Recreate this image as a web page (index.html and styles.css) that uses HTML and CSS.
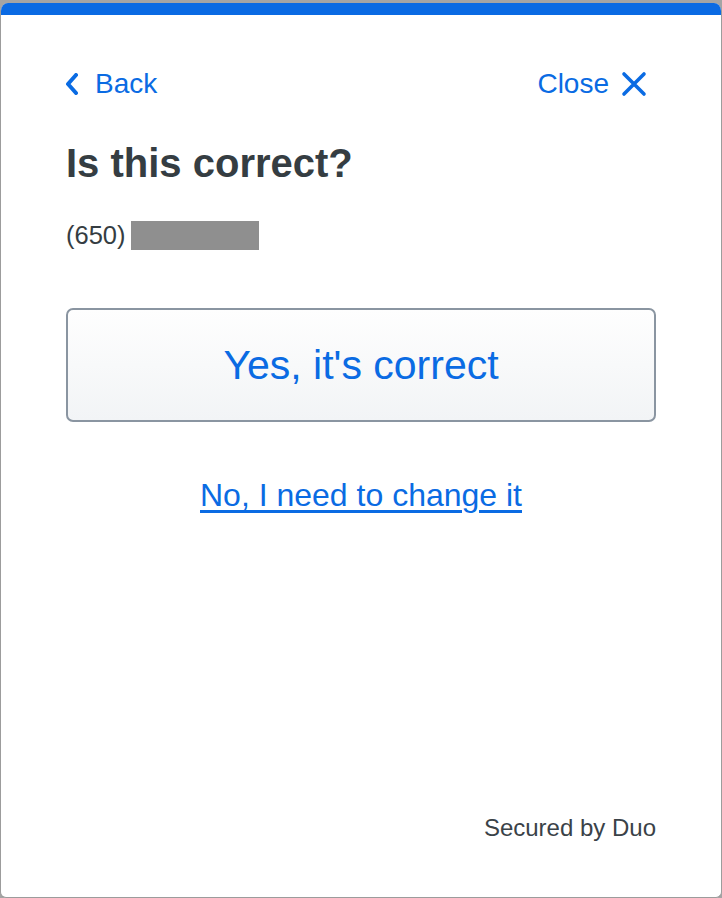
FILE: index.html
```html
<!DOCTYPE html>
<html lang="en">
<head>
<meta charset="utf-8">
<title>Is this correct?</title>
<link rel="stylesheet" href="styles.css">
</head>
<body>
<div class="card">
  <div class="topbar"></div>
  <div class="content">
    <nav class="nav">
      <a class="nav-link back" href="#">
        <svg class="chev" width="14" height="22" viewBox="0 0 14 22" aria-hidden="true"><path d="M11 2 L3 11 L11 20" fill="none" stroke="currentColor" stroke-width="4" stroke-linecap="round" stroke-linejoin="round"/></svg>
        <span>Back</span>
      </a>
      <a class="nav-link close" href="#">
        <span>Close</span>
        <svg class="xicon" width="26" height="26" viewBox="0 0 26 26" aria-hidden="true"><path d="M3 3 L23 23 M23 3 L3 23" fill="none" stroke="currentColor" stroke-width="3.6" stroke-linecap="round"/></svg>
      </a>
    </nav>
    <h1 class="title">Is this correct?</h1>
    <p class="phone">(650) <span class="redact"></span></p>
    <button class="primary" type="button">Yes, it's correct</button>
    <div class="change"><a href="#" class="change-link">No, I need to change it</a></div>
  </div>
  <footer class="footer">Secured by Duo</footer>
</div>
</body>
</html>
```
FILE: styles.css
```css
html, body {
  margin: 0;
  padding: 0;
}
body {
  background: #a4a4a4;
  font-family: "Liberation Sans", Arial, Helvetica, sans-serif;
  width: 722px;
  height: 898px;
  overflow: hidden;
}
.card {
  margin-top: 3px;
  height: 895px;
  box-sizing: border-box;
  background: #ffffff;
  border: 1px solid #9c9c9c;
  border-top: none;
  border-radius: 8px 8px 6px 6px;
  overflow: hidden;
  display: flex;
  flex-direction: column;
}
.topbar {
  height: 12px;
  background: #0a6ae3;
  margin: 0 -1px;
}
.content {
  padding: 0 65px;
  display: flex;
  flex-direction: column;
}
.nav {
  margin-top: 53px;
  display: flex;
  justify-content: space-between;
  align-items: center;
  height: 32px;
}
.nav-link {
  color: #0a6be3;
  text-decoration: none;
  font-size: 28px;
  line-height: 32px;
  display: flex;
  align-items: center;
}
.back .chev {
  margin-right: 16px;
  margin-left: -1px;
}
.close .xicon {
  margin-left: 12px;
  margin-right: 9px;
}
.title {
  margin: 39px 0 0;
  font-size: 40px;
  line-height: 48px;
  font-weight: 700;
  color: #353d42;
}
.phone {
  margin: 32px 0 0;
  font-size: 25.5px;
  line-height: 32px;
  color: #353d42;
  display: flex;
  align-items: center;
}
.redact {
  display: inline-block;
  width: 128px;
  height: 29px;
  background: #8f8f8f;
  margin-left: 5px;
}
.primary {
  margin-top: 57px;
  height: 114px;
  width: 100%;
  border: 2px solid #8a95a1;
  border-radius: 7px;
  background: linear-gradient(#fefefe, #f2f4f6);
  color: #0a6be3;
  font-family: inherit;
  font-size: 41px;
  cursor: pointer;
}
.change {
  margin-top: 53px;
  text-align: center;
  line-height: 40px;
}
.change-link {
  color: #0a6be3;
  font-size: 32px;
  text-decoration: underline;
  text-decoration-thickness: 3px;
  text-underline-offset: 4px;
}
.footer {
  margin-top: auto;
  padding: 0 65px 55px;
  text-align: right;
  font-size: 24px;
  line-height: 28px;
  color: #3a4248;
}
```
